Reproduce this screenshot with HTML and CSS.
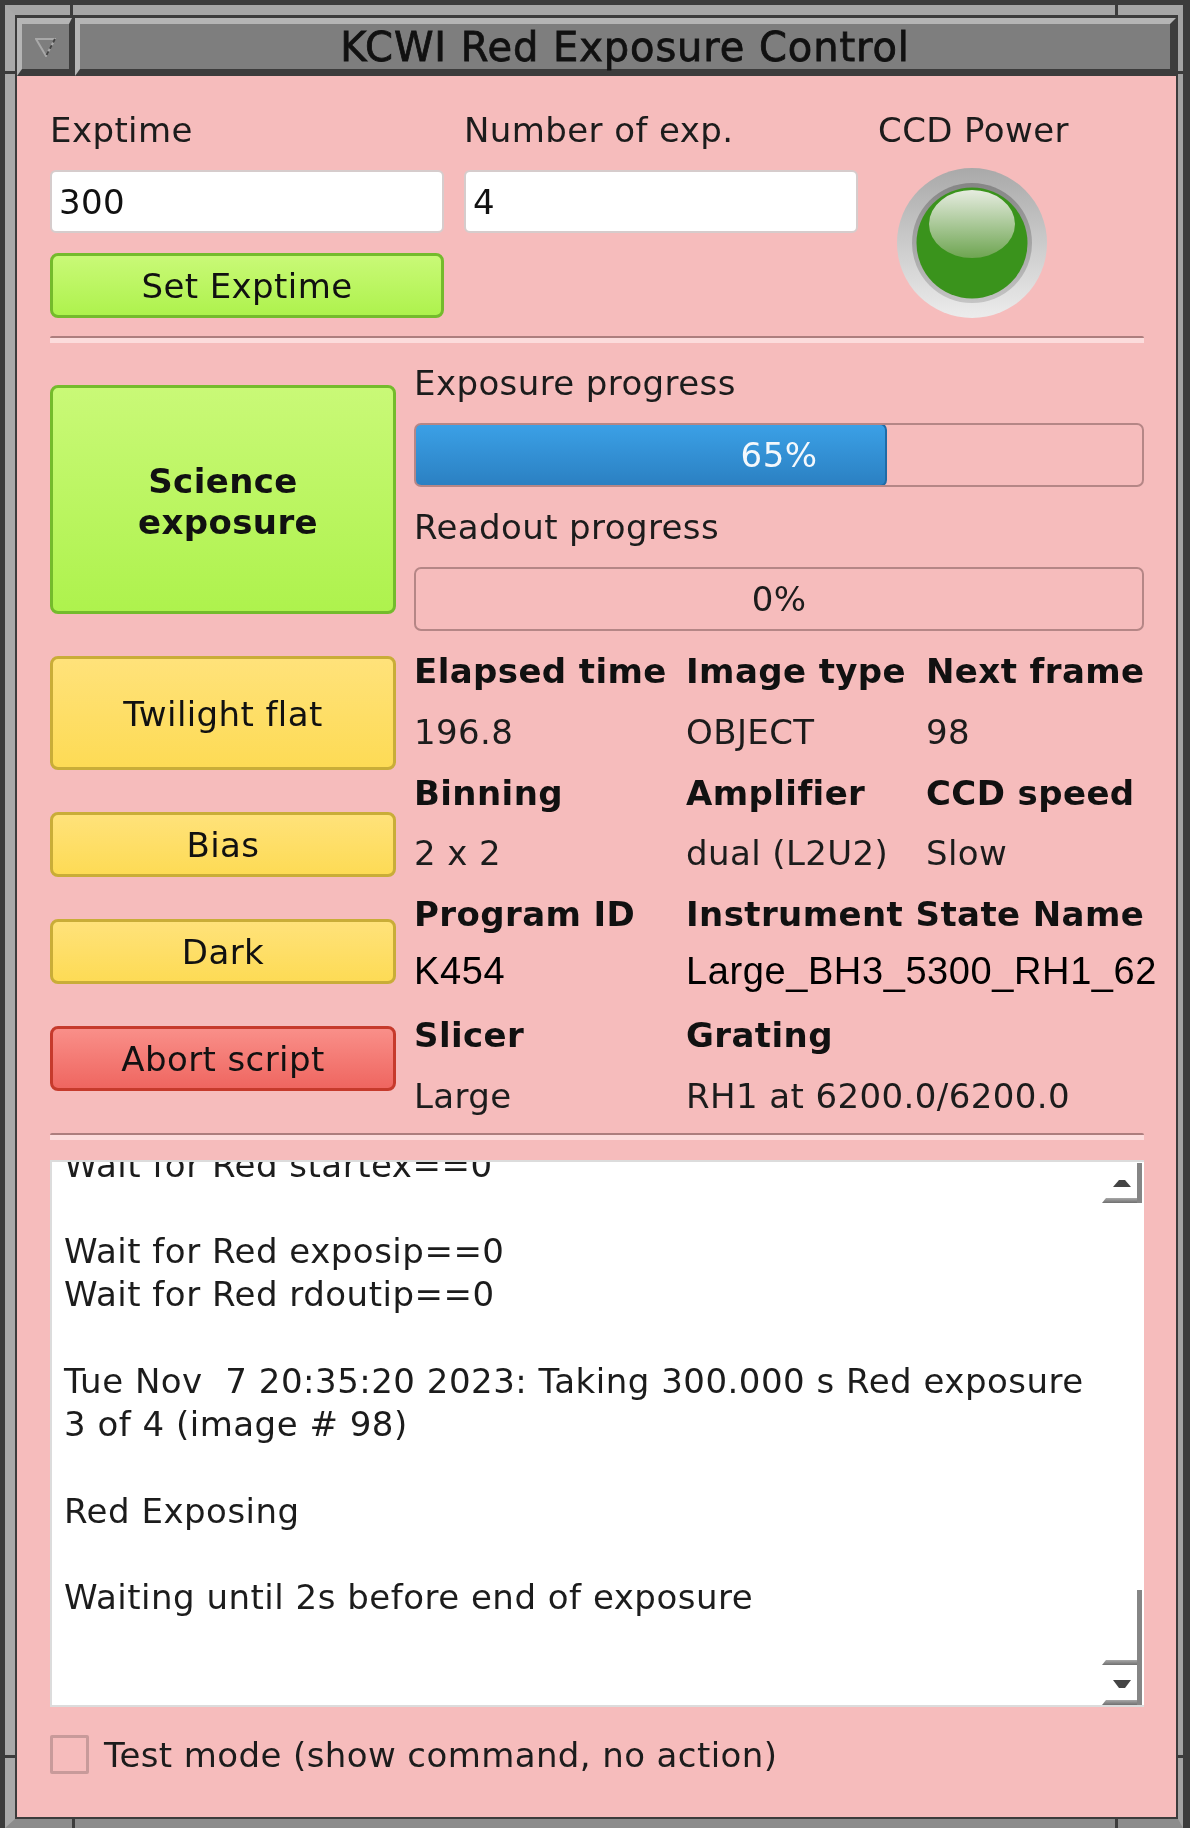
FILE: index.html
```html
<!DOCTYPE html>
<html lang="en">
<head>
<meta charset="utf-8">
<title>KCWI Red Exposure Control</title>
<link rel="stylesheet" href="styles.css">
</head>
<body>
<div class="wm">
  <div class="bevel">
    <div class="inner">
      <div class="titlebar">
        <div class="menu-btn">
          <svg class="menu-tri" viewBox="0 0 21 20" width="21" height="20"><path d="M1 2H20L11 19Z" fill="none" stroke="#a9a9a9" stroke-width="2"/><path d="M20 2L11 19" fill="none" stroke="#444" stroke-width="2" stroke-dasharray="4 3"/></svg>
        </div>
        <div class="title">KCWI Red Exposure Control</div>
      </div>
      <main class="panel">
        <section class="top-row">
          <div class="field">
            <div class="label">Exptime</div>
            <div class="input">300</div>
            <button class="btn green set-btn">Set Exptime</button>
          </div>
          <div class="field">
            <div class="label">Number of exp.</div>
            <div class="input">4</div>
          </div>
          <div class="power">
            <div class="label">CCD Power</div>
            <svg class="led" viewBox="0 0 150 150" width="150" height="150">
              <defs>
                <linearGradient id="ring" x1="0" y1="0" x2="0" y2="1"><stop offset="0" stop-color="#a9a9a9"/><stop offset="1" stop-color="#ececec"/></linearGradient>
                <linearGradient id="ring2" x1="0" y1="0" x2="0" y2="1"><stop offset="0" stop-color="#858585"/><stop offset="1" stop-color="#c4c4c4"/></linearGradient>
                <linearGradient id="hl" x1="0" y1="0" x2="0" y2="1"><stop offset="0" stop-color="#e6ece0"/><stop offset="1" stop-color="#6ea551"/></linearGradient>
              </defs>
              <circle cx="75" cy="75" r="75" fill="url(#ring)"/>
              <circle cx="75" cy="75" r="60" fill="url(#ring2)"/>
              <circle cx="75" cy="75" r="55.5" fill="#3a931c"/>
              <ellipse cx="75" cy="56" rx="43" ry="34" fill="url(#hl)"/>
            </svg>
          </div>
        </section>
        <div class="sep sep-a"></div>
        <section class="main-row">
          <div class="actions">
            <button class="btn green bold science"><span class="l1">Science</span><span class="l2">exposure</span></button>
            <button class="btn yellow twilight">Twilight flat</button>
            <button class="btn yellow short">Bias</button>
            <button class="btn yellow short">Dark</button>
            <button class="btn red short">Abort script</button>
          </div>
          <div class="status">
            <div class="label">Exposure progress</div>
            <div class="bar"><div class="bar-fill" style="width:65.2%"></div><span class="bar-text light">65%</span></div>
            <div class="label">Readout progress</div>
            <div class="bar"><span class="bar-text">0%</span></div>
            <div class="grid">
              <div class="h">Elapsed time</div><div class="h">Image type</div><div class="h">Next frame</div>
              <div>196.8</div><div>OBJECT</div><div>98</div>
              <div class="h">Binning</div><div class="h">Amplifier</div><div class="h">CCD speed</div>
              <div>2 x 2</div><div>dual (L2U2)</div><div>Slow</div>
              <div class="h">Program ID</div><div class="h wide">Instrument State Name</div>
              <div class="plain">K454</div><div class="plain wide">Large_BH3_5300_RH1_62</div>
              <div class="h">Slicer</div><div class="h wide">Grating</div>
              <div>Large</div><div class="wide">RH1 at 6200.0/6200.0</div>
            </div>
          </div>
        </section>
        <div class="sep sep-b"></div>
        <section class="log">
<pre class="log-text">Wait for Red startex==0

Wait for Red exposip==0
Wait for Red rdoutip==0

Tue Nov  7 20:35:20 2023: Taking 300.000 s Red exposure
3 of 4 (image # 98)

Red Exposing

Waiting until 2s before end of exposure</pre>
          <svg class="scroll" viewBox="0 0 50 547" width="50" height="547">
            <defs><linearGradient id="sb" x1="0" y1="0" x2="0" y2="1"><stop offset="0" stop-color="#a8a8a8"/><stop offset="1" stop-color="#6f6f6f"/></linearGradient></defs>
            <path d="M43 3H48V43H43Z" fill="#858585"/>
            <path d="M12 38H43V43H8Z" fill="url(#sb)"/>
            <path d="M19 27L25 20H31L37 27Z" fill="#444"/>
            <path d="M43 430H48V545H43Z" fill="#858585"/>
            <path d="M12 500H43V505H8Z" fill="url(#sb)"/>
            <path d="M19 520H37L31 528H25Z" fill="#444"/>
            <path d="M12 540H43V545H8Z" fill="url(#sb)"/>
          </svg>
        </section>
        <label class="check"><span class="box"></span><span class="check-text">Test mode (show command, no action)</span></label>
      </main>
    </div>
  </div>
  <span class="notch n1"></span><span class="notch n2"></span><span class="notch n3"></span><span class="notch n4"></span><span class="notch n5"></span><span class="notch n6"></span><span class="notch n7"></span><span class="notch n8"></span>
</div>
</body>
</html>
```
FILE: styles.css
```css
* { box-sizing: border-box; }
html, body { margin: 0; padding: 0; background: #3c3c3c; }
body { font-family: "DejaVu Sans", sans-serif; font-size: 34px; letter-spacing: 0.4px; color: #1c1c1c; }
.wm { position: relative; width: 1190px; height: 1828px; padding: 5px 7px 0 5px; background: #3c3c3c; filter: blur(0.6px); overflow: hidden; }
.bevel { height: 1823px; border-style: solid; border-width: 10px 5px 9px 10px; border-color: #a6a6a6 #a3a3a3 #8c8c8c #a9a9a9; }
.inner { height: 100%; padding: 3px 2px 2px 2px; background: #3c3c3c; display: flex; flex-direction: column; }
.titlebar { display: flex; height: 58px; flex: none; }
.menu-btn { width: 55px; margin-right: 3px; display: flex; align-items: center; justify-content: center; background: #7e7e7e; border-style: solid; border-width: 6px 3px 7px 5px; border-color: #b5b5b5 #3c3c3c #3c3c3c #b5b5b5; }
.title { flex: 1; display: flex; align-items: center; justify-content: center; background: #7e7e7e; border-style: solid; border-width: 6px 6px 7px 5px; border-color: #b5b5b5 #3c3c3c #3c3c3c #b5b5b5; color: #111; font-size: 40px; letter-spacing: 0.9px; -webkit-text-stroke: 0.8px #111; }
.panel { flex: 1; background: #f6bcbc; padding: 34px 32px 0 33px; }
.label { height: 40px; line-height: 41px; margin-bottom: 20px; white-space: nowrap; }
.top-row { display: flex; gap: 20px; }
.field { width: 394px; display: flex; flex-direction: column; }
.input { height: 63px; line-height: 61px; padding-left: 7px; background: #fff; border: 2px solid #d6cccc; border-radius: 6px; color: #111; }
.power { width: 190px; display: flex; flex-direction: column; }
.led { margin-left: 19px; margin-top: -2px; }
.btn { display: block; font: inherit; letter-spacing: inherit; color: #111; width: 100%; padding: 0; border-style: solid; border-width: 3px; border-radius: 8px; text-align: center; }
.green { background: linear-gradient(#c9f977, #aef24d); border-color: #74bb2c; }
.yellow { background: linear-gradient(#ffe27a, #fddb55); border-color: #c9ad38; }
.red { background: linear-gradient(#f98f89, #ef6660); border-color: #c63a2c; }
.set-btn { height: 65px; margin-top: 20px; }
.bold { font-weight: 700; }
.sep { height: 7px; border-top: 2px solid #ad7e7e; border-radius: 2px 2px 0 0; background: #fcdcdc; }
.sep-a { margin-top: 18px; }
.main-row { display: flex; gap: 18px; margin-top: 20px; }
.actions { width: 346px; flex: none; padding-top: 22px; display: flex; flex-direction: column; gap: 42px; }
.science { height: 229px; line-height: 41px; padding-top: 4px; }
.science span { display: block; }
.l2 { margin-left: 10px; }
.twilight { height: 114px; padding-top: 2px; }
.short { height: 65px; }
.status { width: 730px; flex: none; }
.bar { position: relative; height: 64px; margin-bottom: 20px; border: 2px solid #b58686; border-radius: 7px; overflow: hidden; display: flex; align-items: center; justify-content: center; }
.bar-fill { position: absolute; left: -2px; top: -2px; bottom: -2px; background: linear-gradient(#3ba0e6, #2b80c2); border: 2px solid #1f6ba6; border-radius: 7px; }
.bar-text { position: relative; }
.light { color: #f4f8fc; }
.grid { display: grid; grid-template-columns: 272px 240px 218px; grid-auto-rows: 60.7px; margin-top: -10px; align-items: center; white-space: nowrap; }
.h { font-weight: 700; color: #111; }
.wide { grid-column: span 2; }
.plain { font-family: "Liberation Sans", sans-serif; color: #000; font-size: 38px; letter-spacing: 0.6px; padding-bottom: 7px; }
.sep-b { margin-top: 6px; }
.log { position: relative; height: 547px; margin-top: 20px; background: #fff; border-left: 2px solid #dcdcdc; border-top: 2px solid #dcdcdc; border-bottom: 2px solid #dcdcdc; overflow: hidden; }
.log-text { margin: -18px 0 0 0; padding-left: 12px; font: inherit; letter-spacing: 0.5px; line-height: 43.3px; color: #1c1c1c; }
.scroll { position: absolute; right: 0; top: -2px; }
.check { display: flex; align-items: center; gap: 15px; margin-top: 28px; height: 39px; }
.check-text { padding-top: 2px; }
.box { width: 39px; height: 39px; border: 3px solid #c89a9a; border-radius: 2px; }
.notch { position: absolute; background: #3c3c3c; }
.n1 { left: 70px; top: 5px; width: 3px; height: 10px; }
.n2 { left: 5px; top: 71px; width: 10px; height: 3px; }
.n3 { right: 72px; top: 5px; width: 3px; height: 10px; }
.n4 { right: 7px; top: 71px; width: 5px; height: 3px; }
.n5 { right: 7px; bottom: 70px; width: 5px; height: 3px; }
.n6 { left: 5px; bottom: 70px; width: 10px; height: 3px; }
.n7 { left: 72px; bottom: 0; width: 3px; height: 9px; }
.n8 { right: 72px; bottom: 0; width: 3px; height: 9px; }
```
